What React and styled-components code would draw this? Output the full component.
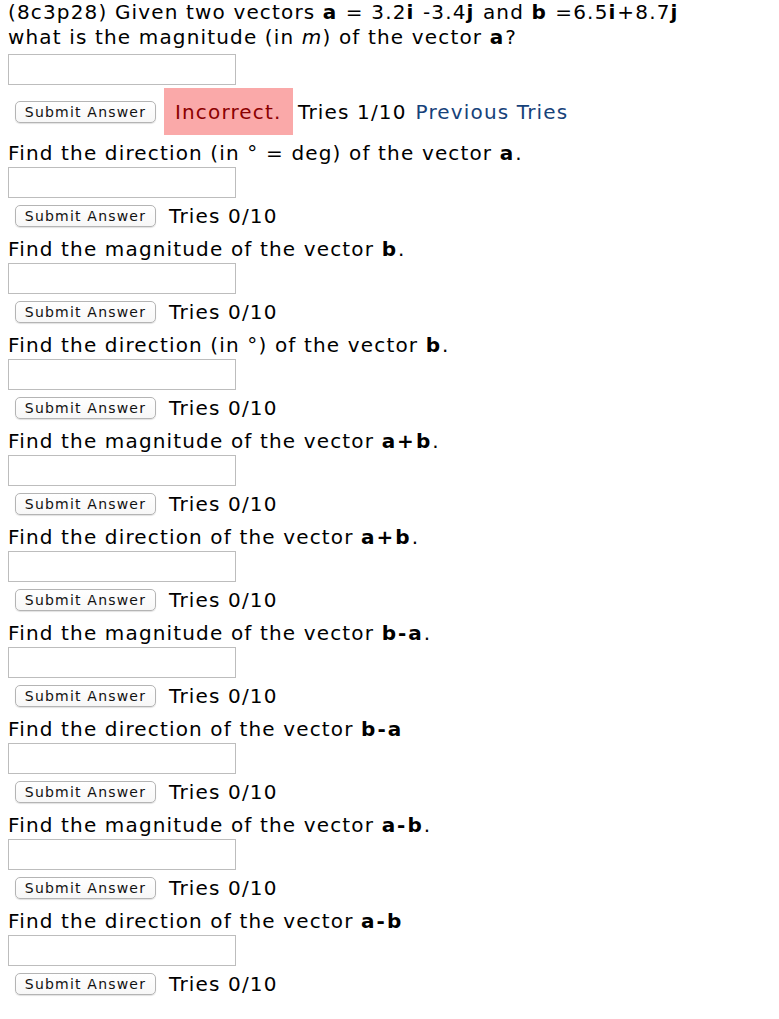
import React from "react";
import styled, { createGlobalStyle } from "styled-components";

const Global = createGlobalStyle`
  html, body { margin: 0; padding: 0; background: #fff; }
  body {
    padding: 0 8px;
    font-family: Verdana, "DejaVu Sans", sans-serif;
    font-size: 20px;
    letter-spacing: 1.15px;
    color: #000;
  }
`;

const Page = styled.div`
  display: flex;
  flex-direction: column;
`;

const Block = styled.section`
  display: flex;
  flex-direction: column;
`;

const Question = styled.div`
  line-height: 25px;
  white-space: nowrap;
  b { font-weight: bold; letter-spacing: 2px; }
  i { font-style: italic; }
`;

const AnswerInput = styled.input`
  box-sizing: border-box;
  width: 228px;
  height: 31px;
  margin: ${(p) => p.$top}px 0 0 0;
  border: 1px solid #bdbdbd;
  background: #fff;
  padding: 2px 4px;
  font-family: inherit;
  font-size: 16px;
  outline: none;
`;

const ActionRow = styled.div`
  display: flex;
  align-items: center;
  padding: 6px 0 9px 7px;
`;

const SubmitButton = styled.button`
  box-sizing: border-box;
  height: 22px;
  width: 141px;
  padding: 0;
  border: 1px solid #b4b4b4;
  border-radius: 5px;
  background: linear-gradient(#ffffff, #f7f7f7);
  box-shadow: 0 1px 1px rgba(0, 0, 0, 0.12);
  font-family: Verdana, "DejaVu Sans", sans-serif;
  font-size: 14px;
  letter-spacing: 1.2px;
  color: #111;
  line-height: 20px;
  margin-right: ${(p) => p.$gap}px;
`;

const Feedback = styled.span`
  display: flex;
  align-items: center;
  box-sizing: border-box;
  height: 47px;
  width: 129px;
  margin: -3px 5px -3px 0;
  padding: 0 0 0 11px;
  background: #faa9a9;
  color: #8b0000;
  line-height: 24px;
`;

const Tries = styled.span`
  line-height: 24px;
  white-space: pre;
`;

const PrevLink = styled.a`
  color: #16427a;
  text-decoration: none;
  margin-left: 9px;
  line-height: 24px;
`;

const questions = [
  <>Find the direction (in ° = deg) of the vector <b>a</b>.</>,
  <>Find the magnitude of the vector <b>b</b>.</>,
  <>Find the direction (in °) of the vector <b>b</b>.</>,
  <>Find the magnitude of the vector <b>a+b</b>.</>,
  <>Find the direction of the vector <b>a+b</b>.</>,
  <>Find the magnitude of the vector <b>b-a</b>.</>,
  <>Find the direction of the vector <b>b-a</b></>,
  <>Find the magnitude of the vector <b>a-b</b>.</>,
  <>Find the direction of the vector <b>a-b</b></>,
];

export default function App() {
  return (
    <Page>
      <Global />
      <Block>
        <Question>
          (8c3p28) Given two vectors <b>a</b> = 3.2<b>i</b> -3.4<b>j</b> and{" "}
          <b>b</b> =6.5<b>i</b>+8.7<b>j</b>
          <br />
          what is the magnitude (in <i>m</i>) of the vector <b>a</b>?
        </Question>
        <AnswerInput $top={4} />
        <ActionRow>
          <SubmitButton $gap={8}>Submit Answer</SubmitButton>
          <Feedback>Incorrect.</Feedback>
          <Tries>Tries 1/10</Tries>
          <PrevLink href="#">Previous Tries</PrevLink>
        </ActionRow>
      </Block>
      {questions.map((q, i) => (
        <Block key={i}>
          <Question>{q}</Question>
          <AnswerInput $top={1} />
          <ActionRow>
            <SubmitButton $gap={13}>Submit Answer</SubmitButton>
            <Tries>Tries 0/10</Tries>
          </ActionRow>
        </Block>
      ))}
    </Page>
  );
}
